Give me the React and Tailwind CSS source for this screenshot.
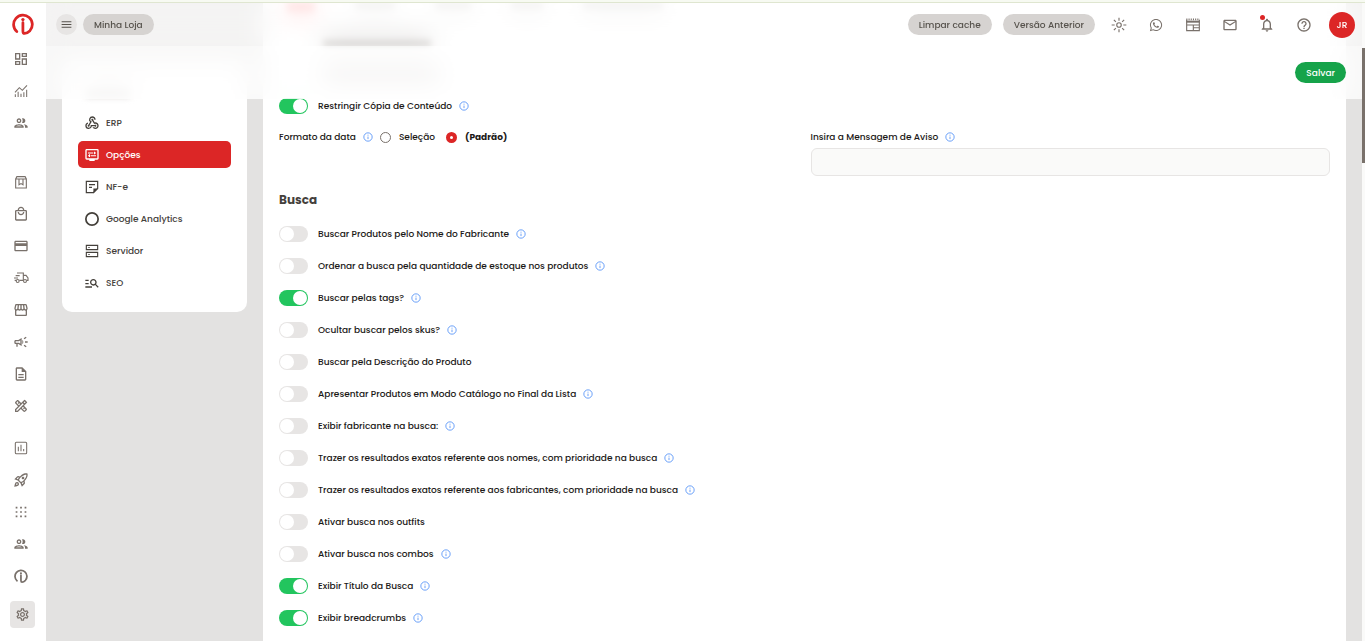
import React from 'react';
import {
  MdOutlineDashboard, MdOutlineGroup, MdOutlineLocalMall, MdCreditCard,
  MdOutlineStorefront, MdOutlineCampaign, MdOutlineDescription, MdOutlineDesignServices,
  MdOutlineRocketLaunch, MdOutlineSettings, MdWebhook,
  MdOutlineDisplaySettings, MdManageSearch, MdMailOutline,
  MdNotificationsNone, MdHelpOutline, MdMenu,
} from 'react-icons/md';
import { FaWhatsapp } from 'react-icons/fa';

function Svg({ className, sw = 2, children }) {
  return (
    <svg viewBox="0 0 24 24" fill="none" stroke="currentColor" strokeWidth={sw} className={className} aria-hidden="true">
      {children}
    </svg>
  );
}

const BrandMark = ({ className }) => (
  <Svg className={className} sw={3}>
    <path d="M5.200 20.200A10.200 10.200 0 1 1 19.600 19.300Q16.500 22.300 13.800 22.300Q11.900 22.300 11.900 19.500V10.600" strokeLinecap="round" />
    <circle cx="11.900" cy="7.200" r="1.800" fill="currentColor" stroke="none" />
  </Svg>
);
const Monitoring = ({ className }) => (
  <Svg className={className} sw={1.6}>
    <path d="M3.500 21v-4M7.700 21v-8M12 21v-5M16.300 21v-7M20.500 21V10M3 14l6.500-7L14 11l7-7.500" />
  </Svg>
);
const Package = ({ className }) => (
  <Svg className={className} sw={1.7}>
    <path d="M4 7.500h16V21H4zM4 7.500 5.800 4h12.400L20 7.500M9 8v8l3-1.700 3 1.700V8" />
  </Svg>
);
const Truck = ({ className }) => (
  <Svg className={className} sw={1.700}>
    <path d="M6 4.500h9.500v11M15.500 8h4l3 4v3.500h-2M4 8.500h6M1.500 12h6M9.500 15.500h6M2.500 15.500h2" />
    <circle cx="7" cy="16.500" r="2.200" />
    <circle cx="18" cy="16.500" r="2.200" />
  </Svg>
);
const Chart = ({ className }) => (
  <Svg className={className} sw={1.600}>
    <rect x="3.500" y="3.500" width="17" height="17" rx="1.500" />
    <path d="M8 10v7M12 7v10M16 13.500V17" />
  </Svg>
);
const Dots = ({ className }) => (
  <Svg className={className} sw={2.600}>
    <path d="M4 5.500h16M4 12h16M4 18.500h16" strokeDasharray="2.600 4.100" />
  </Svg>
);
const StickyNote = ({ className }) => (
  <Svg className={className} sw={1.800}>
    <path d="M20.500 3.500h-17v17h10.500l6.500-6.500zM7.500 8.500h9M7.500 12.500h4.500" />
    <path d="M15 19.500V15h4.500z" fill="currentColor" />
  </Svg>
);
const Ring = ({ className }) => (
  <Svg className={className} sw={2.600}><circle cx="12" cy="12" r="9.200" /></Svg>
);
const Server = ({ className }) => (
  <Svg className={className} sw={1.700}>
    <path d="M3.500 3.500h17v6.500h-17zM3.500 14h17v6.500h-17zM6.500 6.800h2M6.500 17.200h2" />
  </Svg>
);
const Sun = ({ className }) => (
  <Svg className={className} sw={1.700}>
    <circle cx="12" cy="12" r="3.400" />
    <path d="M12 1v4.500M12 18.500V23M1 12h4.500M18.500 12H23M4.300 4.300l3 3M16.700 16.700l3 3M19.700 4.300l-3 3M7.300 16.700l-3 3" />
  </Svg>
);
const News = ({ className }) => (
  <Svg className={className} sw={1.700}>
    <path d="M2.500 4v16.500h19V4M2.500 12h19M12.500 16.200h9M12.500 12v8.500" />
    <path d="M2 7h20" strokeWidth="3" />
    <path d="M2 3.500h20" strokeWidth="2.400" strokeDasharray="1.600 1.700" />
  </Svg>
);
const InfoIcon = () => (
  <svg viewBox="0 0 24 24" fill="none" stroke="currentColor" strokeWidth="1.800" className="size-[10px] shrink-0 text-[#3b82f6]" aria-hidden="true">
    <circle cx="12" cy="12" r="10" />
    <path d="M12 11v6M12 6.500v2.200" />
  </svg>
);

const railGroups = [
  [
    ['Painel', MdOutlineDashboard],
    ['Relatórios', Monitoring],
    ['Clientes', MdOutlineGroup],
  ],
  [
    ['Produtos', Package],
    ['Pedidos', MdOutlineLocalMall],
    ['Pagamentos', MdCreditCard],
    ['Entregas', Truck],
    ['Loja', MdOutlineStorefront],
    ['Marketing', MdOutlineCampaign],
    ['Páginas', MdOutlineDescription],
    ['Design', MdOutlineDesignServices],
  ],
  [
    ['Análises', Chart],
    ['Lançamentos', MdOutlineRocketLaunch],
    ['Aplicativos', Dots],
    ['Usuários', MdOutlineGroup],
    ['Institucional', BrandMark],
  ],
];

const menu = [
  ['ERP', MdWebhook],
  ['Opções', MdOutlineDisplaySettings],
  ['NF-e', StickyNote],
  ['Google Analytics', Ring],
  ['Servidor', Server],
  ['SEO', MdManageSearch],
];

const searchOptions = [
  ['Buscar Produtos pelo Nome do Fabricante', false, true],
  ['Ordenar a busca pela quantidade de estoque nos produtos', false, true],
  ['Buscar pelas tags?', true, true],
  ['Ocultar buscar pelos skus?', false, true],
  ['Buscar pela Descrição do Produto', false, false],
  ['Apresentar Produtos em Modo Catálogo no Final da Lista', false, true],
  ['Exibir fabricante na busca:', false, true],
  ['Trazer os resultados exatos referente aos nomes, com prioridade na busca', false, true],
  ['Trazer os resultados exatos referente aos fabricantes, com prioridade na busca', false, true],
  ['Ativar busca nos outfits', false, false],
  ['Ativar busca nos combos', false, true],
  ['Exibir Título da Busca', true, true],
  ['Exibir breadcrumbs', true, true],
];

function Toggle({ label, on, info }) {
  return (
    <div className="flex h-8 items-center gap-[7px]">
      <label className="flex items-center gap-[10px]">
        <input type="checkbox" defaultChecked={on} className="peer sr-only" />
        <span className="flex h-4 w-[29px] shrink-0 items-center rounded-full bg-stone-200 p-px peer-checked:justify-end peer-checked:bg-[#22c55e]">
          <span className="size-[14px] rounded-full bg-white" />
        </span>
        <span>{label}</span>
      </label>
      {info && <InfoIcon />}
    </div>
  );
}

function Rail() {
  return (
    <nav className="flex w-[46px] shrink-0 flex-col bg-white text-stone-500" aria-label="Principal">
      <a href="#" aria-label="Início" className="flex h-10 items-end justify-center pb-2 text-[#dc2626]">
        <BrandMark className="size-[22px]" />
      </a>
      <div className="flex w-[42px] flex-col">
        {railGroups.map((group, g) => (
          <div key={g} className={g === 0 ? '' : g === 1 ? 'mt-[27px]' : 'mt-[10px]'}>
            {group.map(([name, Icon]) => (
              <a key={name} href="#" aria-label={name} className="flex h-8 items-center justify-center">
                <Icon className={Icon === BrandMark ? 'size-[14px]' : 'size-4'} />
              </a>
            ))}
          </div>
        ))}
      </div>
      <a href="#" aria-label="Configurações" className="ml-[10px] mt-[9px] flex h-[27px] w-[25px] items-center justify-center rounded bg-stone-200">
        <MdOutlineSettings className="size-[15px]" />
      </a>
    </nav>
  );
}

const pill = 'h-[21px] rounded-full bg-stone-300 px-[11px] text-stone-600';
const radio = 'size-[11px] appearance-none rounded-full border border-stone-500 checked:border-4 checked:border-[#dc2626]';

function TopBar() {
  const iconButton = 'relative flex h-8 w-[37px] items-center justify-center text-stone-500';
  return (
    <header className="flex h-[43px] items-center bg-white/60 pl-[10px] pr-[7px] backdrop-blur-md">
      <button aria-label="Menu" className="mr-[6px] flex size-[21px] items-center justify-center rounded-full bg-stone-200 text-stone-600">
        <MdMenu className="size-[13px]" />
      </button>
      <button className={pill}>Minha Loja</button>
      <div className="ml-auto flex items-center">
        <button className={pill}>Limpar cache</button>
        <button className={`${pill} ml-[11px] mr-[5px]`}>Versão Anterior</button>
        <button aria-label="Tema" className={iconButton}><Sun className="size-4" /></button>
        <button aria-label="WhatsApp" className={iconButton}><FaWhatsapp className="size-[14px]" /></button>
        <button aria-label="Novidades" className={iconButton}><News className="size-4" /></button>
        <button aria-label="Mensagens" className={iconButton}><MdMailOutline className="size-4" /></button>
        <button aria-label="Notificações" className={iconButton}>
          <MdNotificationsNone className="size-4" />
          <span className="absolute left-3 top-[6px] size-[5px] rounded-full bg-[#dc2626]" />
        </button>
        <button aria-label="Ajuda" className={iconButton}><MdHelpOutline className="size-4" /></button>
        <button className="ml-[7px] size-[26px] rounded-full bg-[#dc2626] text-white">JR</button>
      </div>
    </header>
  );
}

export default function App() {
  return (
    <div className="flex h-screen flex-col overflow-hidden font-['Poppins','Inter',sans-serif] text-[9px] font-medium leading-4 text-stone-900">
      <div className="h-[3px] shrink-0 border-b border-[#dfe6d0] bg-[#f7faf2]" />
      <div className="flex min-h-0 flex-1">
        <Rail />
        <div className="relative min-w-0 flex-1 overflow-hidden bg-[#e3e2e1]">
          <div className="flex min-h-full items-stretch gap-4 px-4">
            <aside className="mt-[58px] w-[185px] shrink-0 self-start rounded-[10px] bg-white p-4">
              <div className="flex h-[27px] items-center pl-2" aria-hidden="true">
                <span className="h-3 w-11 bg-stone-300 blur-[3px]" />
              </div>
              <ul className="mt-[5px] flex flex-col gap-[5px]">
                {menu.map(([name, Icon]) => (
                  <li key={name}>
                    <a
                      href="#"
                      className={`flex h-[27px] items-center gap-[6px] rounded-[5px] pl-[6px] ${name === 'Opções' ? 'bg-[#dc2626] text-white' : 'text-stone-700'}`}
                    >
                      <Icon className="size-4" />
                      {name}
                    </a>
                  </li>
                ))}
              </ul>
            </aside>
            <main className="min-w-0 flex-1 bg-white px-4">
              <div className="flex h-[23px] items-start gap-10 pl-2" aria-hidden="true">
                <span className="h-3 w-7 bg-red-300 blur-[3px]" />
                <span className="h-2 w-10 bg-stone-300 blur-[3px]" />
                <span className="h-2 w-9 bg-stone-300 blur-[3px]" />
                <span className="h-2 w-8 bg-stone-300 blur-[3px]" />
                <span className="h-2 w-20 bg-stone-300 blur-[3px]" />
              </div>
              <div className="flex h-8 items-center pl-11" aria-hidden="true">
                <span className="h-2 w-[108px] bg-stone-500 blur-[3px]" />
              </div>
              <div className="flex h-8 items-center pl-11" aria-hidden="true">
                <span className="h-2 w-[116px] bg-stone-400 blur-[3px]" />
              </div>
              <Toggle label="Restringir Cópia de Conteúdo" on info />
              <div className="grid grid-cols-2 gap-3 pt-[6px]">
                <fieldset className="flex h-[18px] items-center gap-[7px]">
                  <legend className="float-left">Formato da data</legend>
                  <InfoIcon />
                  <label className="flex items-center gap-2">
                    <input type="radio" name="formato" className={radio} />
                    Seleção
                  </label>
                  <label className="ml-1 flex items-center gap-2 font-bold">
                    <input type="radio" name="formato" defaultChecked className={radio} />
                    (Padrão)
                  </label>
                </fieldset>
                <div>
                  <div className="flex h-[18px] items-center gap-[7px]">
                    <label htmlFor="aviso">Insira a Mensagem de Aviso</label>
                    <InfoIcon />
                  </div>
                  <input id="aviso" type="text" className="mt-[2px] block h-7 w-full rounded-md border border-stone-200 bg-stone-50 px-2" />
                </div>
              </div>
              <h2 className="mb-[6px] mt-3 text-[12px] font-bold leading-6 text-stone-700">Busca</h2>
              {searchOptions.map(([label, on, info]) => (
                <Toggle key={label} label={label} on={on} info={info} />
              ))}
            </main>
          </div>
          <div className="absolute inset-x-0 top-0">
            <TopBar />
            <div className="flex h-[53px] items-start justify-end bg-white/75 pr-4 pt-4 backdrop-blur-md">
              <button className="h-[21px] rounded-full bg-[#16a34a] px-[11px] text-white">Salvar</button>
            </div>
          </div>
        </div>
        <div className="w-[3px] shrink-0 bg-stone-50 pt-[45px]" aria-hidden="true">
          <div className="h-[115px] bg-stone-500" />
        </div>
      </div>
    </div>
  );
}
